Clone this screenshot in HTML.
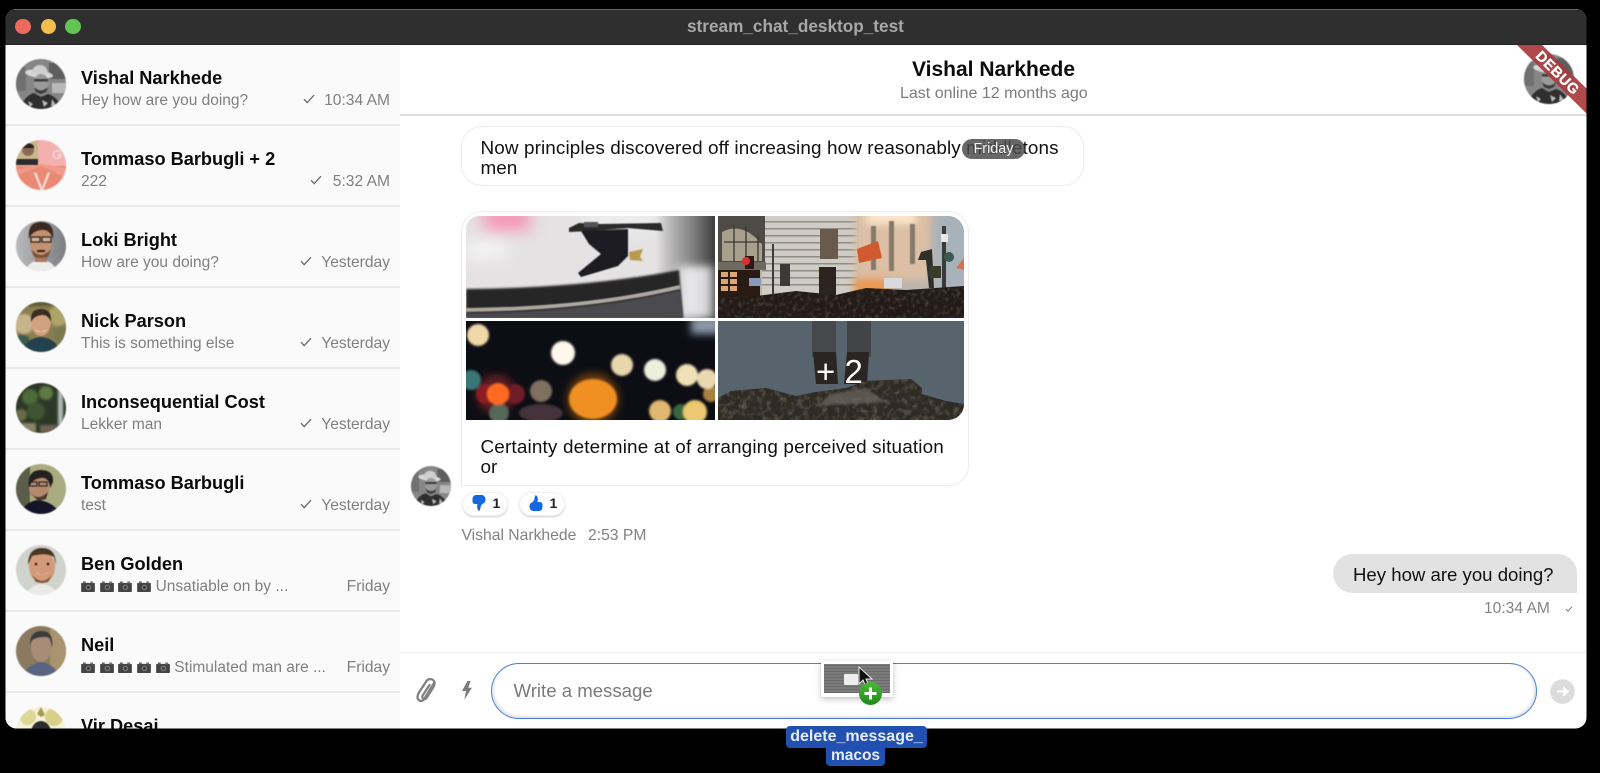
<!DOCTYPE html>
<html><head><meta charset="utf-8"><title>stream_chat_desktop_test</title>
<style>
html,body{margin:0;padding:0;background:#000;width:1600px;height:773px;overflow:hidden}
body{font-family:"Liberation Sans",sans-serif;position:relative}
#win{position:absolute;left:0;top:0;width:1600px;height:773px;clip-path:inset(9px 13.5px 44.5px 5.5px round 11px);background:#fff}
.a{position:absolute;white-space:nowrap}
.div{position:absolute;left:5px;width:395px;height:1.5px;background:#e9e9e9}
.n{position:absolute;left:81px;font-weight:bold;font-size:18.2px;line-height:22px;color:#0b0b0b;white-space:nowrap}
.s{position:absolute;font-size:15.5px;line-height:20px;color:#808080;white-space:nowrap}
.t{position:absolute;right:1210px;font-size:15.6px;line-height:20px;color:#808080;white-space:nowrap}
.ck{position:absolute;width:12px;height:10px}
.av{position:absolute;left:16px;width:50px;height:50px;border-radius:50%;overflow:hidden;display:block;filter:blur(.45px)}
.cam{position:absolute;width:14px;height:11px;filter:blur(.3px)}
.m{font-size:18.9px;line-height:20.4px;color:#111;position:absolute;white-space:nowrap}
</style></head>
<body>
<svg width="0" height="0" style="position:absolute">
<defs>
<filter id="b05" x="-30%" y="-30%" width="160%" height="160%"><feGaussianBlur stdDeviation=".5"/></filter>
<filter id="b1" x="-30%" y="-30%" width="160%" height="160%"><feGaussianBlur stdDeviation="1"/></filter>
<filter id="b2" x="-50%" y="-50%" width="200%" height="200%"><feGaussianBlur stdDeviation="2"/></filter>
<filter id="b4" x="-60%" y="-60%" width="220%" height="220%"><feGaussianBlur stdDeviation="4"/></filter>
<filter id="b8" x="-100%" y="-100%" width="300%" height="300%"><feGaussianBlur stdDeviation="8"/></filter>
<filter id="tex" x="0" y="0" width="100%" height="100%" color-interpolation-filters="sRGB"><feTurbulence type="fractalNoise" baseFrequency=".16" numOctaves="3" seed="4" result="n"/><feColorMatrix in="n" type="matrix" values="0 0 0 0 .42  0 0 0 0 .39  0 0 0 0 .33  2 0 0 0 -.9" result="p"/><feComposite in="p" in2="SourceAlpha" operator="in" result="q"/><feMerge><feMergeNode in="SourceGraphic"/><feMergeNode in="q"/></feMerge></filter>
<filter id="crowd" x="0" y="0" width="100%" height="100%" color-interpolation-filters="sRGB"><feTurbulence type="fractalNoise" baseFrequency=".22" numOctaves="2" seed="9" result="n"/><feColorMatrix in="n" type="matrix" values="0 0 0 0 .36  0 0 0 0 .29  0 0 0 0 .27  2 0 0 0 -.95" result="p"/><feComposite in="p" in2="SourceAlpha" operator="in" result="q"/><feMerge><feMergeNode in="SourceGraphic"/><feMergeNode in="q"/></feMerge></filter>
<linearGradient id="ttr" x1="0" x2="1" y1="0" y2="0"><stop offset="0" stop-color="#777" stop-opacity="0"/><stop offset=".45" stop-color="#888" stop-opacity=".8"/><stop offset="1" stop-color="#3c3c3c"/></linearGradient>
<linearGradient id="ttb" x1="0" x2="1" y1="0" y2="0"><stop offset="0" stop-color="#e8e8ea" stop-opacity="0"/><stop offset=".3" stop-color="#e8e8ea"/><stop offset=".8" stop-color="#dcdcde"/><stop offset="1" stop-color="#777"/></linearGradient>
<symbol id="vishal" viewBox="0 0 50 50">
<rect width="50" height="50" fill="#868686"/>
<rect x="33" y="4" width="17" height="16" fill="#5e5e5e"/><rect x="36" y="24" width="14" height="10" fill="#b8b8b8"/>
<rect x="0" y="8" width="10" height="24" fill="#707070"/>
<ellipse cx="23" cy="15" rx="14" ry="4" fill="#d8d8d8" transform="rotate(8 23 15)"/><path d="M15 15Q17 6 24 6T32 15Z" fill="#cfcfcf"/>
<ellipse cx="25" cy="24" rx="7.500" ry="9" fill="#9a9a9a"/><rect x="18" y="20" width="14" height="2.500" fill="#3c3c3c"/>
<path d="M18 28Q25 35 32 28L30 33L25 35L20 33Z" fill="#3a3a3a"/>
<path d="M4 50Q8 37 18 34L25 38L32 35Q42 38 46 50Z" fill="#2e2e2e"/>
<path d="M12 42l5 3-3 3zM26 41l6 3-4 4zM36 40l4 6-5 1z" fill="#bbb"/>
</symbol>
<symbol id="cm" viewBox="0 0 15 12"><rect y="2" width="15" height="10" rx="1" fill="#444"/><rect x="2" y=".5" width="3" height="2" fill="#666"/><rect x="10" y=".5" width="3" height="2" fill="#777"/><circle cx="8" cy="7" r="3" fill="#777"/><circle cx="8" cy="7" r="1.500" fill="#333"/></symbol>
<symbol id="chk" viewBox="0 0 12 10"><path d="M1 5.200 4.200 8.600 11 1.200" fill="none" stroke="#6f6f6f" stroke-width="1.400"/></symbol>
</defs></svg>

<div id="win">
<!-- title bar -->
<div class="a" style="left:5px;top:9px;width:1582px;height:36px;background:#2f2f2f;border-top:1px solid #666;box-sizing:border-box;border-bottom:1px solid #222"></div>
<div class="a" style="left:15.3px;top:19px;width:15.4px;height:15.4px;border-radius:50%;background:#ec6a5e"></div>
<div class="a" style="left:40.6px;top:19px;width:15.4px;height:15.4px;border-radius:50%;background:#f4bf4f"></div>
<div class="a" style="left:65.3px;top:19px;width:15.4px;height:15.4px;border-radius:50%;background:#61c554"></div>
<div class="a" style="left:687px;top:16px;font-weight:bold;font-size:17.2px;line-height:20px;color:#a8a8a8">stream_chat_desktop_test</div>

<!-- sidebar -->
<div class="a" style="left:5px;top:45px;width:395px;height:684px;background:#fafafa"></div>
<div class="div" style="top:124px"></div><div class="div" style="top:205px"></div><div class="div" style="top:286px"></div><div class="div" style="top:367px"></div><div class="div" style="top:448px"></div><div class="div" style="top:529px"></div><div class="div" style="top:610px"></div><div class="div" style="top:691px"></div>

<svg class="av" style="top:59px" viewBox="0 0 50 50"><use href="#vishal" width="50" height="50"/></svg>
<div class="n" style="top:67px">Vishal Narkhede</div><div class="s" style="left:81px;top:90.5px">Hey how are you doing?</div>
<svg class="ck" style="left:303px;top:94px"><use href="#chk"/></svg><div class="t" style="top:90.5px">10:34 AM</div>

<svg class="av" style="top:140px" viewBox="0 0 50 50"><rect width="50" height="50" fill="#f2b0ae"/><rect y="26" width="50" height="24" fill="#ea8a74"/><rect width="22" height="25" fill="#c9b68e"/><rect y="19" width="22" height="6" fill="#2b2b2b"/><circle cx="12" cy="10" r="6" fill="#8a6a55"/><path d="M6 8Q12 0 18 6L18 8H6Z" fill="#2a2420"/><path d="M0 36L25 26L50 38L50 28L25 24L0 30Z" fill="#f09a88"/><text x="36" y="19" font-family="Liberation Sans" font-size="13" font-weight="bold" fill="#f8d8d8">G</text><text x="26" y="50" text-anchor="middle" font-family="Liberation Sans" font-size="25" fill="#fde0d8">V</text></svg>
<div class="n" style="top:148px">Tommaso Barbugli + 2</div><div class="s" style="left:81px;top:171.5px">222</div>
<svg class="ck" style="left:310px;top:175px"><use href="#chk"/></svg><div class="t" style="top:171.5px">5:32 AM</div>

<svg class="av" style="top:221px" viewBox="0 0 50 50"><defs><linearGradient id="lk"><stop offset="0" stop-color="#b9babc"/><stop offset="1" stop-color="#7c7e82"/></linearGradient></defs><rect width="50" height="50" fill="url(#lk)"/><path d="M10 50Q12 40 25 39Q38 40 40 50Z" fill="#ececea"/><rect x="19" y="30" width="12" height="11" fill="#a87a60"/><ellipse cx="25" cy="20" rx="11" ry="15" fill="#c29272"/><path d="M13 18Q11 1 25 1T37 18Q34 8 25 9T13 18Z" fill="#3c2a20"/><path d="M15 28Q25 40 35 28L32 36L25 37L18 36Z" fill="#7a5238"/><rect x="15" y="16" width="9" height="5" fill="#d6b098" stroke="#222" stroke-width="1.200"/><rect x="26" y="16" width="9" height="5" fill="#d6b098" stroke="#222" stroke-width="1.200"/><rect x="21" y="29" width="8" height="2" fill="#3a2018"/></svg>
<div class="n" style="top:229px">Loki Bright</div><div class="s" style="left:81px;top:252.5px">How are you doing?</div>
<svg class="ck" style="left:300px;top:256px"><use href="#chk"/></svg><div class="t" style="top:252.5px">Yesterday</div>

<svg class="av" style="top:302px" viewBox="0 0 50 50"><rect width="50" height="50" fill="#8a7d50"/><g filter="url(#b1)"><circle cx="8" cy="22" r="10" fill="#c8b48a"/><circle cx="42" cy="14" r="10" fill="#aea468"/><circle cx="45" cy="32" r="8" fill="#7a7a50"/><circle cx="6" cy="40" r="8" fill="#3e5a50"/><rect y="0" width="50" height="4" fill="#5a5a30"/></g><path d="M6 50Q10 36 25 35Q40 36 44 50Z" fill="#24424e"/><ellipse cx="25" cy="22" rx="9.500" ry="12" fill="#d0a080"/><path d="M15 20Q14 7 25 7T35 20Q32 12 25 13T15 20Z" fill="#3a2c20"/><path d="M18 27Q25 33 32 27L25 30Z" fill="#f4f0e8"/></svg>
<div class="n" style="top:310px">Nick Parson</div><div class="s" style="left:81px;top:333.5px">This is something else</div>
<svg class="ck" style="left:300px;top:337px"><use href="#chk"/></svg><div class="t" style="top:333.5px">Yesterday</div>

<svg class="av" style="top:383px" viewBox="0 0 50 50"><rect width="50" height="50" fill="#2c3826"/><g filter="url(#b1)"><circle cx="14" cy="14" r="8" fill="#4e6a3a"/><circle cx="30" cy="10" r="7" fill="#5d7a44"/><circle cx="20" cy="28" r="9" fill="#3c5430"/><circle cx="5" cy="32" r="6" fill="#6a6a4c"/><rect x="42" y="4" width="5" height="38" fill="#b4c0bc"/><rect x="24" y="42" width="20" height="8" fill="#6e6258"/><rect x="0" y="40" width="20" height="10" fill="#8a8468"/></g></svg>
<div class="n" style="top:391px">Inconsequential Cost</div><div class="s" style="left:81px;top:414.5px">Lekker man</div>
<svg class="ck" style="left:300px;top:418px"><use href="#chk"/></svg><div class="t" style="top:414.5px">Yesterday</div>

<svg class="av" style="top:464px" viewBox="0 0 50 50"><rect width="50" height="50" fill="#a8ac80"/><rect width="14" height="50" fill="#5a5e48"/><path d="M5 50Q8 38 22 36Q38 38 44 50Z" fill="#15152a"/><ellipse cx="23" cy="23" rx="10" ry="13" fill="#b48a6e"/><path d="M13 20Q12 6 25 6T37 18L34 24Q33 12 24 14T14 22Z" fill="#25201c"/><path d="M14 28Q22 38 32 28L30 35L22 37Z" fill="#4a3a30"/><rect x="13" y="18" width="8" height="4" fill="none" stroke="#222" stroke-width="1.100"/><rect x="23" y="18" width="8" height="4" fill="none" stroke="#222" stroke-width="1.100"/></svg>
<div class="n" style="top:472px">Tommaso Barbugli</div><div class="s" style="left:81px;top:495.5px">test</div>
<svg class="ck" style="left:300px;top:499px"><use href="#chk"/></svg><div class="t" style="top:495.5px">Yesterday</div>

<svg class="av" style="top:545px" viewBox="0 0 50 50"><rect width="50" height="50" fill="#d0d2cc"/><path d="M10 50Q14 40 25 39Q38 40 42 50Z" fill="#eceae6"/><ellipse cx="26" cy="22" rx="13" ry="16" fill="#d29a78"/><path d="M12 20Q12 3 26 3T40 20L38 12Q30 7 16 11Z" fill="#4a3628"/><path d="M16 30Q26 42 36 30L32 37L26 38L20 37Z" fill="#7a5238"/><path d="M19 27Q26 32 33 27L26 30Z" fill="#fff"/><circle cx="20" cy="19" r="1.300" fill="#222"/><circle cx="32" cy="19" r="1.300" fill="#222"/></svg>
<div class="n" style="top:553px">Ben Golden</div>
<svg class="cam" style="left:81px;top:581px"><use href="#cm"/></svg><svg class="cam" style="left:99.6px;top:581px"><use href="#cm"/></svg><svg class="cam" style="left:118.3px;top:581px"><use href="#cm"/></svg><svg class="cam" style="left:137px;top:581px"><use href="#cm"/></svg>
<div class="s" style="left:155.6px;top:576.5px">Unsatiable on by ...</div><div class="t" style="top:576.5px">Friday</div>

<svg class="av" style="top:626px" viewBox="0 0 50 50"><rect width="50" height="50" fill="#8a7a60"/><rect x="34" width="16" height="50" fill="#a8946e"/><path d="M6 50Q12 38 25 36Q38 38 44 50Z" fill="#5a6480"/><ellipse cx="25" cy="22" rx="10" ry="14" fill="#a88c78"/><path d="M14 18Q14 5 26 5T36 22L34 12Q26 9 16 14Z" fill="#3c3c3c"/></svg>
<div class="n" style="top:634px">Neil</div>
<svg class="cam" style="left:81px;top:662px"><use href="#cm"/></svg><svg class="cam" style="left:99.6px;top:662px"><use href="#cm"/></svg><svg class="cam" style="left:118.3px;top:662px"><use href="#cm"/></svg><svg class="cam" style="left:137px;top:662px"><use href="#cm"/></svg><svg class="cam" style="left:155.6px;top:662px"><use href="#cm"/></svg>
<div class="s" style="left:174.3px;top:657.5px">Stimulated man are ...</div><div class="t" style="top:657.5px">Friday</div>

<svg class="av" style="top:707px" viewBox="0 0 50 50"><rect width="50" height="50" fill="#f4f2d8"/><circle cx="12" cy="10" r="8" fill="#dcd89a"/><circle cx="38" cy="10" r="9" fill="#d8d088"/><path d="M25 0L29 8 25 10 21 7Z" fill="#a89a50"/><ellipse cx="25" cy="26" rx="10" ry="12" fill="#2c2c30"/><ellipse cx="25" cy="34" rx="8" ry="9" fill="#a07a5a"/></svg>
<div class="n" style="top:715px">Vir Desai</div>

<!-- chat header -->
<div class="a" style="left:400px;top:114px;width:1187px;height:1.5px;background:#dedede"></div>
<div class="a" style="left:912px;top:58px;font-weight:bold;font-size:21px;line-height:24px;color:#0b0b0b">Vishal Narkhede</div>
<div class="a" style="left:900px;top:84px;font-size:16px;line-height:20px;color:#7c7c7c">Last online 12 months ago</div>
<svg class="a" style="left:1524px;top:54px;width:50px;height:50px;border-radius:50%;filter:blur(.45px)" viewBox="0 0 50 50"><use href="#vishal" width="50" height="50"/></svg>
<svg class="a" style="left:1500px;top:45px;width:90px;height:72px" viewBox="0 0 90 72"><path d="M17 0H42L87 44V69Z" fill="#a8393d" fill-opacity=".92"/><text transform="translate(57 28.500) rotate(45)" text-anchor="middle" dominant-baseline="central" font-family="Liberation Sans" font-weight="bold" font-size="14.500" fill="#fff" stroke="#fff" stroke-width=".3" letter-spacing=".5">DEBUG</text></svg>

<!-- message 1 -->
<div class="a" style="left:461px;top:126px;width:623px;height:60px;box-sizing:border-box;border:1.3px solid #ececec;border-radius:21px"></div>
<div class="m" style="left:480.5px;top:138.500px;letter-spacing:.11px">Now principles discovered off increasing how reasonably middletons</div>
<div class="m" style="left:480.5px;top:158.900px">men</div>
<div class="a" style="left:962px;top:139px;width:63px;height:20px;border-radius:10px;background:rgba(75,75,75,.84);color:#f2f2f2;font-size:14.4px;line-height:20px;text-align:center">Friday</div>

<!-- message 2 -->
<div class="a" style="left:461px;top:211px;width:508px;height:275px;box-sizing:border-box;border:1.3px solid #ececec;border-radius:21px 21px 21px 0"></div>
<svg class="a" style="left:466px;top:216px;width:498px;height:204px;border-radius:13px 16px 16px 0;filter:blur(.35px)" viewBox="0 0 498 204">
<!-- turntable -->
<svg x="0" y="0" width="249" height="102" viewBox="0 0 249 102">
<rect width="249" height="102" fill="#e4e2e2"/>
<g filter="url(#b8)"><rect x="18" y="-8" width="46" height="22" fill="#f88fb4"/><rect x="0" y="28" width="40" height="12" fill="#fdfdfd"/><rect x="120" y="-6" width="70" height="20" fill="#efefef"/></g>
<rect x="190" y="0" width="59" height="102" fill="url(#ttr)"/>
<rect x="205" y="50" width="44" height="52" fill="url(#ttb)" filter="url(#b4)"/>
<g filter="url(#b1)"><path d="M0 73Q120 72 213 54L217 102H0Z" fill="#252527"/></g>
<path d="M0 94Q120 93 214 71" fill="none" stroke="#aca8a0" stroke-width="4" filter="url(#b05)"/>
<g filter="url(#b1)"><path d="M0 97Q120 96 214 74L217 102H0Z" fill="#4c4c4f"/></g>
<g filter="url(#b05)"><path d="M103 12 113 7 135 8 195 7 197 15 162 12 125 15 103 16Z" fill="#2a2a2c"/><path d="M115 15 162 13 162 40 152 50 115 61 112 57 135 38 123 28Z" fill="#1f1f21"/><path d="M118 6h14v5h-14z" fill="#555"/><path d="M163 36 177 33 174 41 177 45 164 44Z" fill="#b89a50"/></g>
</svg>
<!-- street -->
<svg x="252" y="0" width="246" height="102" viewBox="252 0 246 102">
<rect x="252" width="246" height="102" fill="#bcb4aa"/>
<rect x="296" width="95" height="80" fill="#cfcbc5"/>
<g fill="#85807a" opacity=".85"><rect x="296" y="5" width="95" height="1.500"/><rect x="296" y="12" width="95" height="1.500"/><rect x="296" y="19" width="95" height="1.500"/><rect x="296" y="26" width="95" height="1.500"/><rect x="296" y="33" width="95" height="1.500"/><rect x="296" y="40" width="95" height="1.500"/><rect x="296" y="47" width="95" height="1.500"/><rect x="296" y="54" width="95" height="1.500"/><rect x="296" y="61" width="95" height="1.500"/><rect x="296" y="68" width="95" height="1.500"/></g>
<rect x="354" y="13" width="18" height="30" fill="#6a5a4c"/><rect x="353" y="51" width="17" height="28" fill="#2c241e"/>
<g filter="url(#b4)"><rect x="389" y="-6" width="75" height="70" fill="#dcbfa4"/><rect x="400" y="-6" width="50" height="14" fill="#fbe6cc"/><rect x="468" y="-6" width="36" height="80" fill="#a8b2ba"/><rect x="388" y="62" width="34" height="22" fill="#e89a50"/></g>
<g fill="#85796a" filter="url(#b05)"><rect x="405" y="10" width="5" height="44"/><rect x="423" y="5" width="5" height="50"/><rect x="444" y="8" width="5" height="40"/></g>
<path d="M252 0H299V52H252Z" fill="#4e4a46"/>
<path d="M256 45V16Q276 5 296 28V45Z" fill="#a8a08c"/>
<g stroke="#3a3632" stroke-width="1.300" fill="none"><path d="M268 10V45M280 10V45M292 20V45M258 26H296"/></g>
<rect x="252" y="46" width="48" height="8" fill="#6e6a62"/>
<rect x="252" y="54" width="42" height="34" fill="#2a1a14"/>
<g fill="#dda670"><rect x="255" y="56" width="7" height="5"/><rect x="264" y="56" width="7" height="5"/><rect x="255" y="63" width="7" height="5"/><rect x="264" y="63" width="7" height="5"/><rect x="255" y="70" width="7" height="5"/><rect x="264" y="70" width="7" height="5"/></g>
<rect x="279" y="40" width="9" height="13" fill="#301818"/><circle cx="280" cy="45" r="4" fill="#d83030"/>
<rect x="283" y="62" width="12" height="8" fill="#8a9ab8"/>
<rect x="314" y="48" width="10" height="22" fill="#3a3a38"/><rect x="306" y="28" width="2" height="50" fill="#3c3c3a"/>
<path d="M391 33 412 25 416 42 393 47Z" fill="#d05a30"/>
<rect x="476" y="10" width="4" height="66" fill="#3a3a3a"/><rect x="475" y="18" width="7" height="8" fill="#e8e8e8"/>
<path d="M455 36 466 33 468 72H463L460 44H452Z" fill="#2e2e2c"/><rect x="463" y="50" width="12" height="12" fill="#3a3a28"/>
<circle cx="483" cy="41" r="5" fill="#3c5a4e"/>
<path d="M490 52 498 42V54Z" fill="#d87058"/>
<rect x="418" y="62" width="18" height="10" fill="#d8dade"/>
<path d="M252 82 290 80 330 75 370 79 400 72 440 74 498 70V102H252Z" fill="#221b18" filter="url(#crowd)"/>
</svg>
<!-- bokeh -->
<svg x="0" y="105" width="249" height="99" viewBox="0 105 249 99">
<rect y="105" width="249" height="99" fill="#0c0e14"/>
<g filter="url(#b4)"><rect x="225" y="100" width="30" height="18" fill="#8a98a8"/><circle cx="30" cy="178" r="20" fill="#5a1a20"/><circle cx="127" cy="183" r="26" fill="#6a3a10"/></g>
<g filter="url(#b1)">
<circle cx="5" cy="164" r="10" fill="#3b7474"/><circle cx="20" cy="178" r="10" fill="#8a1a20"/><circle cx="49" cy="178" r="10" fill="#6e1a26"/>
<circle cx="75" cy="175" r="11" fill="#806f60"/><circle cx="33" cy="197" r="10" fill="#566858"/>
<ellipse cx="75" cy="197" rx="22" ry="9" fill="#45303a"/>
<circle cx="245" cy="178" r="8" fill="#a88040"/><circle cx="215" cy="196" r="8" fill="#35693c"/>
<circle cx="12" cy="119" r="11" fill="#f0d8a8"/><circle cx="97" cy="137" r="12" fill="#fff8ea"/><circle cx="156" cy="149" r="11" fill="#e8d6ac"/><circle cx="189" cy="154" r="11" fill="#eeeedc"/><circle cx="221" cy="159" r="11" fill="#f0e0b8"/><circle cx="241" cy="163" r="10" fill="#ecd8b0"/>
<circle cx="32" cy="178" r="11" fill="#ff6a20"/>
<ellipse cx="127" cy="183" rx="24" ry="20" fill="#f09020"/>
<circle cx="194" cy="195" r="11" fill="#e0b870"/><circle cx="229" cy="196" r="12" fill="#ecc870"/>
</g></svg>
<!-- boots -->
<svg x="252" y="105" width="246" height="99" viewBox="252 105 246 99">
<rect x="252" y="105" width="246" height="99" fill="#57636d"/>
<rect x="346" y="105" width="24" height="36" fill="#47484c"/><rect x="381" y="105" width="24" height="36" fill="#434448"/>
<path d="M347 136H370L372 168H350Z" fill="#2a2522"/><path d="M381 136H403L401 168H378Z" fill="#2a2522"/>
<path d="M252 204V182L265 175 300 172 330 180 350 176 380 172 400 165 445 163 456 172 456 178 480 185 498 188V204Z" fill="#2e2a24" filter="url(#tex)"/>
<path d="M364 178 400 172 420 186 352 190Z" fill="#6c675e" opacity=".7" filter="url(#b1)"/>
</svg>
</svg>
<div class="a" style="left:816px;top:353px;font-size:33px;line-height:38px;color:#fff">+ 2</div>
<div class="m" style="left:480.5px;top:437.500px;letter-spacing:.16px">Certainty determine at of arranging perceived situation</div>
<div class="m" style="left:480.5px;top:457.900px">or</div>
<svg class="a" style="left:411px;top:466px;width:40px;height:40px;border-radius:50%;filter:blur(.4px)" viewBox="0 0 50 50"><use href="#vishal" width="50" height="50"/></svg>

<!-- reactions -->
<div class="a" style="left:462px;top:492px;width:46px;height:24px;box-sizing:border-box;border:1px solid #eee;border-radius:13px;background:#fff;box-shadow:0 1.5px 1.5px #ddd"></div>
<div class="a" style="left:519px;top:492px;width:46px;height:24px;box-sizing:border-box;border:1px solid #eee;border-radius:13px;background:#fff;box-shadow:0 1.5px 1.5px #ddd"></div>
<svg class="a" style="left:472px;top:495px;width:14px;height:16px" viewBox="0 0 14 16"><path d="M.5 4C.5 1.500 2 0 4.500 0H9.500C12 0 13.500 2 13.500 4.500S12.500 8 11 8.500L9 10.500 8 15C8 15.700 6.800 15.900 6.200 15.200 5 13.800 5 11 5.500 9H3C1.500 9 .5 7.500 .5 6.500Z" fill="#1467e0"/></svg>
<svg class="a" style="left:529px;top:495px;width:14px;height:16px" viewBox="0 0 14 16"><path d="M13.500 12C13.500 14.500 12 16 9.500 16H4.500C2 16 .5 14 .5 11.500S1.500 8 3 7.500L5 5.500 6 1C6 .3 7.200 .1 7.800 .8 9 2.200 9 5 8.500 7H11C12.500 7 13.500 8.500 13.500 9.500Z" fill="#1467e0"/></svg>
<div class="a" style="left:492.500px;top:494px;font-size:14px;font-weight:bold;line-height:18px;color:#222">1</div>
<div class="a" style="left:549.500px;top:494px;font-size:14px;font-weight:bold;line-height:18px;color:#222">1</div>
<div class="a" style="left:461.500px;top:525.500px;font-size:15.700px;line-height:20px;color:#828282">Vishal Narkhede</div>
<div class="a" style="left:588px;top:525.500px;font-size:15.700px;line-height:20px;color:#828282">2:53 PM</div>

<!-- own message -->
<div class="a" style="left:1333px;top:553.500px;width:244px;height:39px;background:#e2e2e2;border-radius:20px 20px 0 20px"></div>
<div class="m" style="left:1353px;top:565px;font-size:18.600px;color:#111">Hey how are you doing?</div>
<div class="a" style="left:1484px;top:599px;font-size:15.600px;line-height:20px;color:#838383">10:34 AM</div>
<svg class="a" style="left:1565px;top:606px;width:8px;height:6px" viewBox="0 0 12 10"><path d="M1 5.200 4.200 8.600 11 1.200" fill="none" stroke="#777" stroke-width="1.600"/></svg>

<!-- input -->
<div class="a" style="left:400px;top:651.500px;width:1187px;height:1px;background:#f1f1f1"></div>
<div class="a" style="left:491px;top:663px;width:1046px;height:55.500px;box-sizing:border-box;border:1.500px solid #4c80d6;border-radius:28px;box-shadow:inset 2px -2px 2px #e2e6ec,inset -2px -1px 2px #e2e2e2;background:#fff"></div>
<div class="a" style="left:513.500px;top:680px;font-size:18.600px;line-height:22px;color:#7a7a7a">Write a message</div>
<svg class="a" style="left:415px;top:677px;width:24px;height:28px" viewBox="0 0 24 28"><path d="M19 6 9.500 21.500C8 24.500 4.500 24.500 3.200 22.500 2 20.500 2.500 18 4 15.500L11.500 4C13 1.800 16 1.500 18 3 20 4.500 20 7.500 18.500 10L11.500 21C10.500 22.300 9 22.500 8 21.500 7 20.500 7.200 19 8 18L14.500 8" fill="none" stroke="#828282" stroke-width="2.300" stroke-linecap="round"/></svg>
<svg class="a" style="left:460.500px;top:681px;width:11px;height:19px" viewBox="0 0 12 21"><path d="M7 0H10.500L8 7.500H12L3.500 21 5.500 11H1Z" fill="#7c7c7c"/></svg>
<svg class="a" style="left:1549.500px;top:678.500px;width:25px;height:25px" viewBox="0 0 25 25"><circle cx="12.500" cy="12.500" r="12.300" fill="#dcdcdc"/><path d="M7 12.500H16.500M13 8.500 17.500 12.500 13 16.500" fill="none" stroke="#fff" stroke-width="2.200"/></svg>
</div>

<!-- drag preview -->
<div class="a" style="left:821px;top:661px;width:72px;height:36px;background:#fff;box-shadow:0 2px 6px rgba(0,0,0,.25);"></div>
<div class="a" style="left:824px;top:664px;width:66px;height:29px;background:#6e6e6e;background-image:repeating-linear-gradient(0deg,#6a6a6a 0 1px,#7c7c7c 1px 3px)"></div>
<div class="a" style="left:844px;top:674px;width:14px;height:11px;background:#eee;border-radius:1px"></div>
<svg class="a" style="left:857px;top:666px;width:16px;height:22px" viewBox="0 0 16 22"><path d="M2 1V18L6 14 9 21 12 20 9 13H15Z" fill="#111" stroke="#eee" stroke-width="1"/></svg>
<svg class="a" style="left:858px;top:681px;width:25px;height:25px" viewBox="0 0 25 25"><defs><linearGradient id="gg" x1="0" y1="0" x2="0" y2="1"><stop offset="0" stop-color="#49b83a"/><stop offset="1" stop-color="#1f8a18"/></linearGradient></defs><circle cx="12.500" cy="12.500" r="11.500" fill="url(#gg)"/><path d="M12.500 6.500V18.500M6.500 12.500H18.500" stroke="#fff" stroke-width="3"/></svg>

<!-- file label -->
<div class="a" style="left:786px;top:726px;width:141px;height:22px;background:#2150b0;border-radius:4px"></div>
<div class="a" style="left:826px;top:746px;width:59px;height:20px;background:#2150b0;border-radius:0 0 4px 4px"></div>
<div class="a" style="left:786px;top:726px;width:141px;text-align:center;font-weight:bold;font-size:16px;line-height:22px;color:#e6ecf8">delete_message_</div>
<div class="a" style="left:826px;top:746px;width:59px;text-align:center;font-weight:bold;font-size:15.500px;line-height:20px;color:#e6ecf8">macos</div>
</body></html>
